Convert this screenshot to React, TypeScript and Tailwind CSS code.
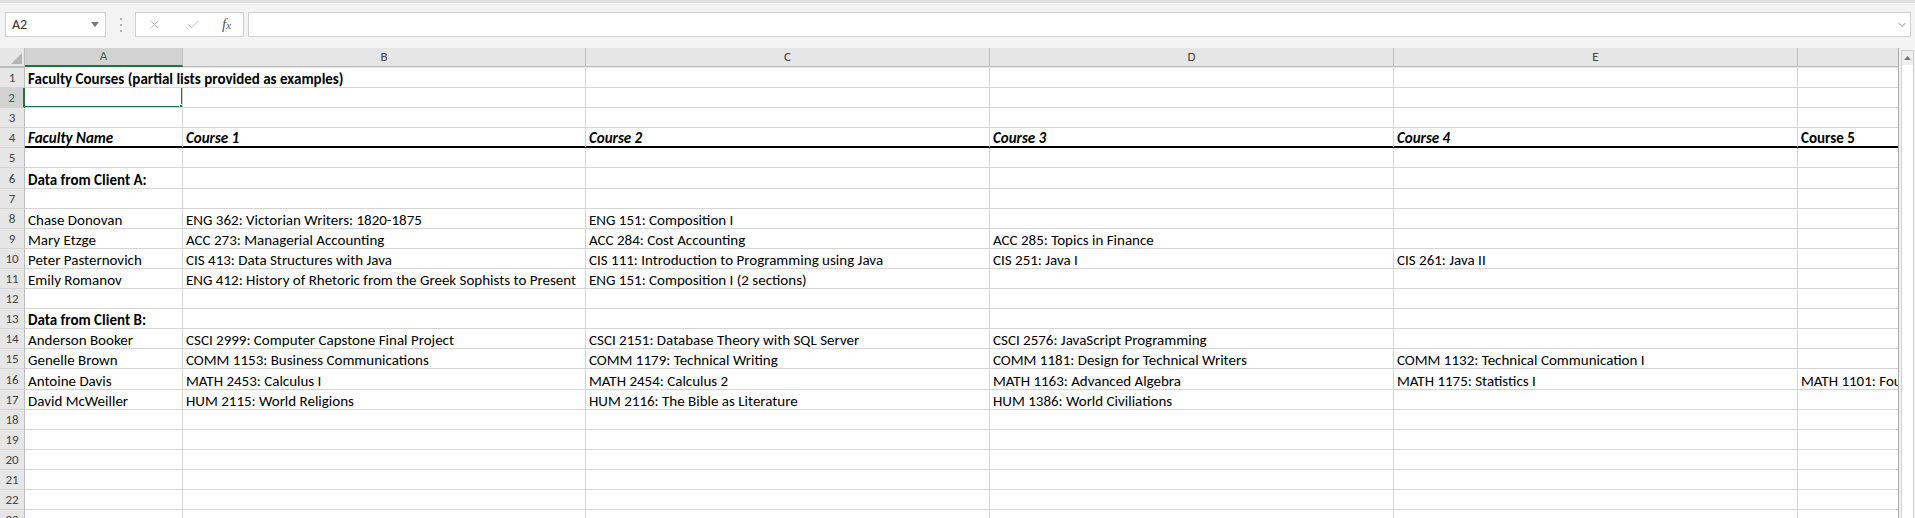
import { Check, ChevronDown, X } from "lucide-react";

type Cell = { text: string; bold?: boolean; italic?: boolean };

const COLS = ["A", "B", "C", "D", "E", "F"];
const GRID = "grid grid-cols-[25px_158px_403px_404px_404px_404px_101px]";

const ROWS: Record<number, (Cell | null)[]> = {
  4: [
    { text: "Faculty Name", bold: true, italic: true },
    { text: "Course 1", bold: true, italic: true },
    { text: "Course 2", bold: true, italic: true },
    { text: "Course 3", bold: true, italic: true },
    { text: "Course 4", bold: true, italic: true },
    { text: "Course 5", bold: true },
  ],
  6: [{ text: "Data from Client A:", bold: true }],
  8: [{ text: "Chase Donovan" }, { text: "ENG 362: Victorian Writers: 1820-1875" }, { text: "ENG 151: Composition I" }],
  9: [
    { text: "Mary Etzge" },
    { text: "ACC 273: Managerial Accounting" },
    { text: "ACC 284: Cost Accounting" },
    { text: "ACC 285: Topics in Finance" },
  ],
  10: [
    { text: "Peter Pasternovich" },
    { text: "CIS 413: Data Structures with Java" },
    { text: "CIS 111: Introduction to Programming using Java" },
    { text: "CIS 251: Java I" },
    { text: "CIS 261: Java II" },
  ],
  11: [
    { text: "Emily Romanov" },
    { text: "ENG 412: History of Rhetoric from the Greek Sophists to Present" },
    { text: "ENG 151: Composition I (2 sections)" },
  ],
  13: [{ text: "Data from Client B:", bold: true }],
  14: [
    { text: "Anderson Booker" },
    { text: "CSCI 2999: Computer Capstone Final Project" },
    { text: "CSCI 2151: Database Theory with SQL Server" },
    { text: "CSCI 2576: JavaScript Programming" },
  ],
  15: [
    { text: "Genelle Brown" },
    { text: "COMM 1153: Business Communications" },
    { text: "COMM 1179: Technical Writing" },
    { text: "COMM 1181: Design for Technical Writers" },
    { text: "COMM 1132: Technical Communication I" },
  ],
  16: [
    { text: "Antoine Davis" },
    { text: "MATH 2453: Calculus I" },
    { text: "MATH 2454: Calculus 2" },
    { text: "MATH 1163: Advanced Algebra" },
    { text: "MATH 1175: Statistics I" },
    { text: "MATH 1101: Foundations" },
  ],
  17: [
    { text: "David McWeiller" },
    { text: "HUM 2115: World Religions" },
    { text: "HUM 2116: The Bible as Literature" },
    { text: "HUM 1386: World Civiliations" },
  ],
};

function CellText({ cell }: { cell: Cell | null | undefined }) {
  if (!cell) return null;
  return (
    <span className={`whitespace-nowrap ${cell.bold ? "font-bold" : ""} ${cell.italic ? "italic" : ""}`}>
      {cell.text}
    </span>
  );
}

function RowHead({ n }: { n: number }) {
  const sel = n === 2;
  return (
    <div
      className={`flex items-end justify-center pb-[1px] text-[13px] leading-[16px] border-b border-[#d4d4d4] ${
        sel ? "bg-[#d2d2d2] text-[#217346] border-r-2 border-r-[#217346]" : "bg-[#e6e6e6] text-[#444] border-r border-r-[#bdbdbd]"
      }`}
    >
      {n}
    </div>
  );
}

function Row({ n }: { n: number }) {
  const data = ROWS[n] ?? [];
  const underline = n === 4;
  const base = `flex items-end px-[3px] overflow-hidden leading-[16px] border-r border-r-[#d4d4d4] ${
    underline ? "border-b-2 border-b-black" : "border-b border-b-[#d4d4d4]"
  }`;

  if (n === 1) {
    return (
      <div className={`${GRID} h-[20.1px]`}>
        <RowHead n={n} />
        <div className={`col-span-2 ${base}`}>
          <CellText cell={{ text: "Faculty Courses (partial lists provided as examples)", bold: true }} />
        </div>
        {[2, 3, 4, 5].map((i) => (
          <div key={i} className={base} />
        ))}
      </div>
    );
  }

  return (
    <div className={`${GRID} h-[20.1px]`}>
      <RowHead n={n} />
      {COLS.map((c, i) => (
        <div key={c} className={`relative ${base}`}>
          <CellText cell={data[i]} />
          {n === 2 && i === 0 && (
            <div className="pointer-events-none absolute -left-[2px] -top-[2px] -right-[1px] -bottom-[1px] z-10 border-2 border-[#217346]">
              <div className="absolute -right-[4px] -bottom-[4px] h-[6px] w-[6px] border border-white bg-[#217346]" />
            </div>
          )}
        </div>
      ))}
    </div>
  );
}

function FormulaBar() {
  return (
    <div className="h-[48px] border-t-[3px] border-t-[#e1e1e1] pt-[9px] flex items-start">
      <div className="ml-[5px] flex h-[25px] w-[101px] items-center justify-between border border-[#d0d0d0] bg-white pl-[6px] pr-[6px] text-[14px] leading-none text-[#333]">
        <span>A2</span>
        <svg width="8" height="5" viewBox="0 0 8 5">
          <path d="M0 0h8L4 5z" fill="#777" />
        </svg>
      </div>
      <div className="ml-[14px] mt-[6px] flex h-[14px] flex-col justify-between">
        <span className="block h-[2px] w-[2px] bg-[#b0b0b0]" />
        <span className="block h-[2px] w-[2px] bg-[#b0b0b0]" />
        <span className="block h-[2px] w-[2px] bg-[#b0b0b0]" />
      </div>
      <div className="ml-[13px] flex h-[25px] w-[109px] items-center border border-[#d0d0d0] bg-white pl-[11px]">
        <X size={15} strokeWidth={1.3} className="text-[#b3b3b3]" />
        <Check size={15} strokeWidth={1.3} className="ml-[24px] text-[#b3b3b3]" />
        <span className="ml-[21px] font-['Liberation_Serif',serif] text-[15px] leading-none italic text-[#555]">
          f<span className="text-[11px]">x</span>
        </span>
      </div>
      <div className="ml-[4px] flex h-[25px] w-[1663px] items-center justify-end border border-[#d0d0d0] bg-white pr-[2px]">
        <ChevronDown size={12} strokeWidth={2} className="text-[#8a8a8a]" />
      </div>
    </div>
  );
}

export default function App() {
  const rows = Array.from({ length: 23 }, (_, i) => i + 1);
  return (
    <div className="h-[518px] w-[1915px] overflow-hidden bg-[#f3f3f3] font-['Carlito','Lato',sans-serif] text-[15px] text-black">
      <FormulaBar />
      <div className="flex">
        <div className="w-[1899px] overflow-hidden border-r border-r-[#a9a9a9] bg-white">
          <div className={`${GRID} h-[20px] bg-[#e6e6e6] text-[13px] leading-[16px] text-[#444]`}>
            <div className="flex items-end justify-end border-r border-b border-[#bdbdbd] pr-[2px] pb-[2px]">
              <svg width="11" height="11" viewBox="0 0 11 11">
                <path d="M11 0V11H0z" fill="#b5b5b5" />
              </svg>
            </div>
            {COLS.map((c) => (
              <div
                key={c}
                className={`flex items-center justify-center border-r border-r-[#bdbdbd] ${
                  c === "A" ? "bg-[#d2d2d2] text-[#3f6b4f] border-b-2 border-b-[#217346]" : "border-b border-b-[#bdbdbd]"
                }`}
              >
                {c === "F" ? "" : c}
              </div>
            ))}
            <div className="border-b border-b-[#bdbdbd]" />
          </div>
          {rows.map((n) => (
            <Row key={n} n={n} />
          ))}
        </div>
        <div className="ml-[2px] mt-[2px] h-[470px] w-[13px] border border-[#cfcfcf] bg-white">
          <div className="flex h-[14px] items-center justify-center bg-[#f0f0f0]">
            <svg width="7" height="4" viewBox="0 0 7 4">
              <path d="M3.5 0L7 4H0z" fill="#777" />
            </svg>
          </div>
        </div>
      </div>
    </div>
  );
}
